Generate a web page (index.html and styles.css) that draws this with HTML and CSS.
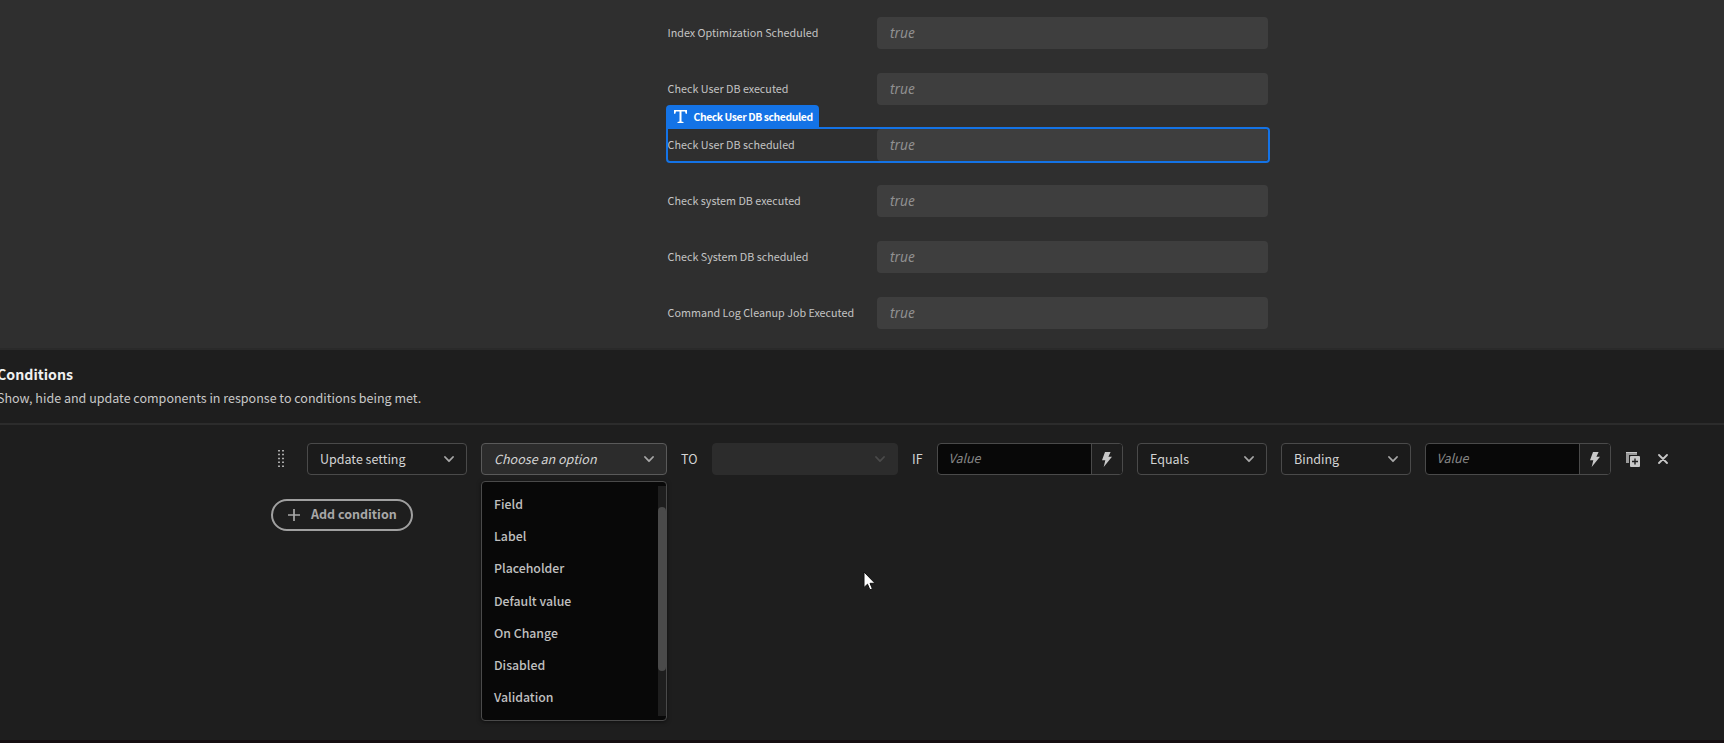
FILE: index.html
```
<!DOCTYPE html>
<html lang="en">
<head>
<meta charset="utf-8">
<title>Conditions</title>
<link rel="stylesheet" href="styles.css">
</head>
<body>
<svg class="sprite" aria-hidden="true">
  <symbol id="chevron" viewBox="0 0 10 7"><path d="M1 1l4 4.2L9 1" fill="none" stroke="currentColor" stroke-width="1.8" stroke-linecap="round" stroke-linejoin="round"/></symbol>
  <symbol id="bolt" viewBox="0 0 10 15"><path d="M3 0h5.6L6.4 4.8H10L1.7 15l1.6-6.8H0z" fill="currentColor"/></symbol>
</svg>
<main class="app">
  <section class="canvas">
    <div class="form">
      <div class="field"><label>Index Optimization Scheduled</label><div class="input">true</div></div>
      <div class="field"><label>Check User DB executed</label><div class="input">true</div></div>
      <div class="field selected"><div class="tag"><svg width="13" height="13" viewBox="0 0 13 13"><path d="M0 0h13v3.8h-1.3L11 1.5H7.5v10l2 .4V13h-6v-1.1l2-.4v-10H2l-.7 2.3H0z" fill="#fff"/></svg><span>Check User DB scheduled</span></div><label>Check User DB scheduled</label><div class="input">true</div></div>
      <div class="field"><label>Check system DB executed</label><div class="input">true</div></div>
      <div class="field"><label>Check System DB scheduled</label><div class="input">true</div></div>
      <div class="field"><label>Command Log Cleanup Job Executed</label><div class="input">true</div></div>
    </div>
  </section>
  <section class="panel">
    <header class="head">
      <h1>Conditions</h1>
      <p>Show, hide and update components in response to conditions being met.</p>
    </header>
    <div class="row">
      <svg class="grip" width="6" height="17" viewBox="0 0 6 17"><path d="M1 0v17M5 0v17" stroke="#aaa" stroke-width="2" stroke-dasharray="1.5 2.37"/></svg>
      <div class="picker w160"><span>Update setting</span><svg class="chev"><use href="#chevron"/></svg></div>
      <div class="picker w186 open"><em>Choose an option</em><svg class="chev"><use href="#chevron"/></svg>
        <div class="menu">
          <ul><li>Field</li><li>Label</li><li>Placeholder</li><li>Default value</li><li>On Change</li><li>Disabled</li><li>Validation</li></ul>
          <div class="track"><div class="thumb"></div></div>
        </div>
      </div>
      <span class="word to">TO</span>
      <div class="picker w186 disabled"><svg class="chev"><use href="#chevron"/></svg></div>
      <span class="word if">IF</span>
      <div class="value"><em>Value</em><span class="bolt"><svg width="10" height="15"><use href="#bolt"/></svg></span></div>
      <div class="picker w130"><span>Equals</span><svg class="chev"><use href="#chevron"/></svg></div>
      <div class="picker w130"><span>Binding</span><svg class="chev"><use href="#chevron"/></svg></div>
      <div class="value"><em>Value</em><span class="bolt"><svg width="10" height="15"><use href="#bolt"/></svg></span></div>
      <svg class="copy" width="14" height="15" viewBox="0 0 14 15"><path d="M0 0h11v3H3v8H0z" fill="#9a9a9a"/><path d="M0 .5h11" stroke="#c8c8c8"/><rect x="4" y="4" width="10" height="11" rx="1" fill="#c8c8c8"/><path d="M9 6.5v6M6 9.5h6" stroke="#1e1e1e" stroke-width="1.4"/></svg>
      <svg class="close" width="10" height="10" viewBox="0 0 10 10"><path d="M1 1l8 8M9 1L1 9" stroke="#c8c8c8" stroke-width="1.8" stroke-linecap="round"/></svg>
    </div>
    <button class="add"><svg width="12" height="12" viewBox="0 0 12 12"><path d="M6 0v12M0 6h12" stroke="#a8a8a8" stroke-width="1.7"/></svg><span>Add condition</span></button>
  </section>
  <svg class="cursor" width="13" height="20" viewBox="0 0 13 20"><path d="M1 1v15.5l3.5-3.3 2.4 5.6 2.5-1-2.4-5.5H12z" fill="#fff" stroke="#111" stroke-width="1"/></svg>
</main>
</body>
</html>
```
FILE: styles.css
```
* { box-sizing: border-box; }
body { margin: 0; font-family: "Noto Sans CJK SC", "Noto Sans", sans-serif; font-size: 12.5px; }
.sprite { position: absolute; width: 0; height: 0; }
.app { position: relative; width: 1724px; height: 743px; overflow: hidden; background: #1e1e1e; border-bottom: 3px solid #160f12; }
.canvas { height: 350px; background: #2f2f2f; border-bottom: 2px solid #2a2a2a; padding: 17px 0 0 667px; }
.form { width: 601px; display: flex; flex-direction: column; gap: 24px; }
.field { position: relative; height: 32px; display: flex; align-items: center; color: #c4c4c4; }
.field label { width: 210px; padding-left: .6px; font-size: 10.75px; line-height: 18px; white-space: nowrap; }
.input { flex: 1; height: 32px; padding-left: 13px; border-radius: 4px; background: #3e3e3e; color: #909090; font: italic 13.7px/32px "Noto Sans", sans-serif; }
.selected::after { content: ""; position: absolute; inset: -2px -2px -2px -1px; border: 2px solid #1473e6; border-radius: 0 4px 4px 4px; }
.tag { position: absolute; left: -1px; top: -24px; width: 153px; height: 23px; padding: 0 0 0 7.5px; border-radius: 4px 4px 0 0; background: #1473e6; color: #fff; font-size: 10.4px; letter-spacing: -.42px; font-weight: 700; white-space: nowrap; display: flex; align-items: center; gap: 7px; }
.tag svg { flex: none; }
.tag span { padding-bottom: 1px; }
.panel { height: 390px; color: #d4d4d4; }
.head { height: 75px; padding-top: 14px; border-bottom: 2px solid #2c2c2c; }
.head h1 { margin: 0 0 0 -3px; font-size: 14.2px; line-height: 20px; color: #f0f0f0; }
.head p { margin: 4px 0 0 -3px; font-size: 12.53px; line-height: 20px; color: #c8c8c8; }
.row { display: flex; align-items: center; height: 32px; margin-top: 18px; padding-left: 278px; }
.grip { margin: 0 23px 2px 0; }
.picker { position: relative; flex: none; height: 32px; margin-right: 14px; padding: 0 12px; display: flex; align-items: center; justify-content: space-between; border: 1px solid #4a4a4a; border-radius: 4px; background: #1b1b1b; white-space: nowrap; }
.picker > span, .picker > em { padding-bottom: 2px; }
.w160 { width: 160px; }
.w186 { width: 186px; }
.w130 { width: 130px; }
.chev { width: 10px; height: 7px; color: #a8a8a8; margin-left: auto; }
.open { background: #2c2c2c; border-color: #5a5a5a; }
.open > em { font-size: 12.55px; }
.disabled { background: #2c2c2c; border-color: #2c2c2c; }
.disabled .chev { color: #4a4a4a; }
.word { flex: none; padding-bottom: 2px; }
.to { width: 31px; }
.if { width: 25px; }
.value { flex: none; width: 186px; height: 32px; margin-right: 14px; display: flex; border: 1px solid #4a4a4a; border-radius: 4px; background: #080808; overflow: hidden; }
.value em { flex: 1; padding-left: 10.5px; line-height: 27px; color: #868686; }
.bolt { width: 31px; display: flex; align-items: center; justify-content: center; border-left: 1px solid #4a4a4a; background: #1e1e1e; color: #c8c8c8; }
.copy { margin-left: 1px; }
.close { margin-left: 18px; }
.menu { position: absolute; left: -1px; top: 37px; width: 186px; height: 240px; border: 1px solid #4a4a4a; border-radius: 4px; background: #080808; box-shadow: 0 1px 4px rgba(0,0,0,.5); color: #c0c0c0; font-size: 12.3px; font-weight: 500; }
.menu ul { list-style: none; margin: 0; padding: 6px 0 0 12px; }
.menu li { height: 32.2px; line-height: 32px; }
.track { position: absolute; right: 0; top: 4px; width: 8px; height: 230px; background: #1e1e1e; }
.thumb { margin-top: 21px; height: 164px; border-radius: 4px; background: #4a4a4a; }
.track { display: flow-root; }
.add { display: flex; align-items: center; gap: 11px; width: 142px; height: 32px; margin: 24px 0 0 271px; padding: 0 0 1px 15px; border: 2px solid #a0a0a0; border-radius: 16px; background: transparent; color: #a8a8a8; font: 700 12.5px "Noto Sans CJK SC", sans-serif; white-space: nowrap; }
.add span { padding-bottom: 2px; }
.cursor { position: absolute; left: 862.5px; top: 571px; }
```
